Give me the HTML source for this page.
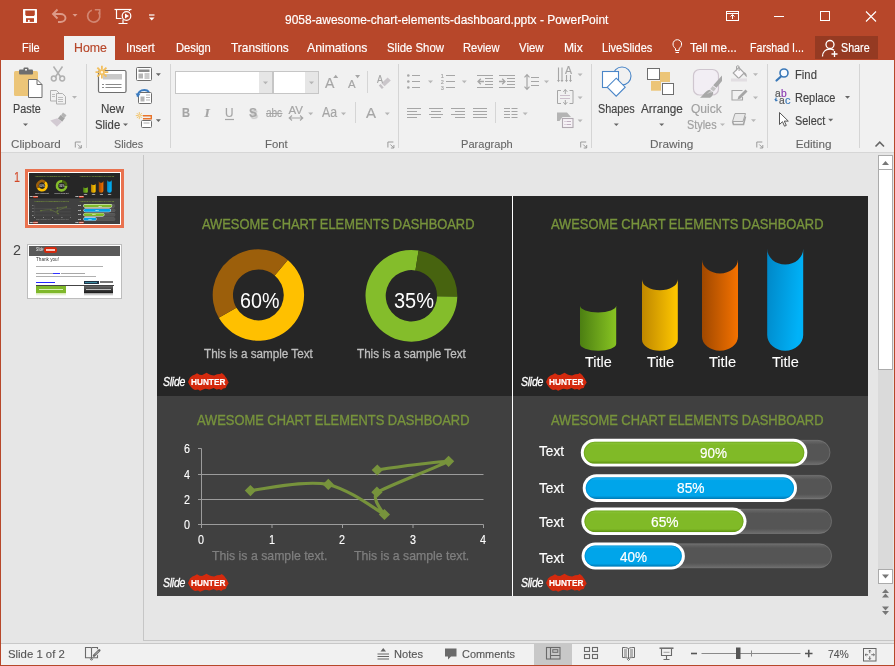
<!DOCTYPE html>
<html>
<head>
<meta charset="utf-8">
<title>PowerPoint</title>
<style>
*{box-sizing:border-box;margin:0;padding:0}
html,body{width:895px;height:666px;overflow:hidden;background:#e6e6e6;font-family:"Liberation Sans",sans-serif;}
#app{position:relative;width:895px;height:666px;overflow:hidden;background:#e6e6e6;will-change:transform}
.abs{position:absolute}
.t{position:absolute;white-space:nowrap;line-height:1;transform-origin:0 50%;display:block;-webkit-text-stroke:.18px}
</style>
</head>
<body>
<div id="app">
<!-- titlebar -->
<div class="abs" style="left:0px;top:0px;width:895px;height:60px;background:#b7472a;"></div>
<span class="t" style="left:284.50px;top:13.00px;font-size:13.3px;color:#fff;transform:scaleX(0.9004);">9058-awesome-chart-elements-dashboard.pptx - PowerPoint</span>
<div class="abs" style="left:64px;top:36px;width:51px;height:24px;background:#f1f1f1;"></div>
<span class="t" style="left:21.50px;top:41.00px;font-size:13.3px;color:#fff;transform:scaleX(0.8259);">File</span>
<span class="t" style="left:73.70px;top:41.00px;font-size:13.3px;color:#b7472a;transform:scaleX(0.9273);">Home</span>
<span class="t" style="left:126.40px;top:41.00px;font-size:13.3px;color:#fff;transform:scaleX(0.8658);">Insert</span>
<span class="t" style="left:175.70px;top:41.00px;font-size:13.3px;color:#fff;transform:scaleX(0.8406);">Design</span>
<span class="t" style="left:230.60px;top:41.00px;font-size:13.3px;color:#fff;transform:scaleX(0.8938);">Transitions</span>
<span class="t" style="left:307.40px;top:41.00px;font-size:13.3px;color:#fff;transform:scaleX(0.9180);">Animations</span>
<span class="t" style="left:387.20px;top:41.00px;font-size:13.3px;color:#fff;transform:scaleX(0.8566);">Slide Show</span>
<span class="t" style="left:463.30px;top:41.00px;font-size:13.3px;color:#fff;transform:scaleX(0.8393);">Review</span>
<span class="t" style="left:519.30px;top:41.00px;font-size:13.3px;color:#fff;transform:scaleX(0.8570);">View</span>
<span class="t" style="left:563.50px;top:41.00px;font-size:13.3px;color:#fff;transform:scaleX(0.9089);">Mix</span>
<span class="t" style="left:601.70px;top:41.00px;font-size:13.3px;color:#fff;transform:scaleX(0.8297);">LiveSlides</span>
<span class="t" style="left:690.00px;top:41.00px;font-size:13.3px;color:#fff;transform:scaleX(0.8795);">Tell me...</span>
<span class="t" style="left:750.00px;top:41.00px;font-size:13.3px;color:#fff;transform:scaleX(0.8013);">Farshad I...</span>
<div class="abs" style="left:815px;top:36px;width:63px;height:23px;background:#953a22;"></div>
<span class="t" style="left:841.40px;top:41.00px;font-size:13.3px;color:#fff;transform:scaleX(0.8058);">Share</span>
<svg class="abs" style="left:0;top:0" width="895" height="60" viewBox="0 0 895 60" fill="none">
<!-- save -->
<rect x="23" y="9" width="14" height="14" rx=".6" fill="#fff"/>
<path d="M25.300 10.400h9.500v4.400l-.9 1.200h-7.700l-.9-1.200z" fill="#b7472a"/>
<rect x="26" y="18.200" width="8" height="3.700" fill="#b7472a"/><rect x="28" y="19.900" width="1.700" height="2" fill="#fff"/>
<!-- undo -->
<g stroke="#dc9a88" stroke-width="1.9" fill="none">
<path d="M57.5 9.5l-4.5 4.5 4.5 4.5"/><path d="M53.5 14h7a5 4 0 0 1 0 8h-2.5"/>
</g>
<path d="M72.5 14h5l-2.5 2.7z" fill="#dc9a88"/>
<!-- redo -->
<g stroke="#d28672" stroke-width="1.6" fill="none">
<path d="M94.8 9.700h4.900v4.900"/><path d="M91.800 10.200A6.100 6.100 0 1 0 98.600 12.300" stroke-width="1.700"/>
</g>
<!-- slideshow from start -->
<g stroke="#fff" stroke-width="1.2" fill="none">
<path d="M114.5 9.5h17"/><path d="M116.5 10v8.5h5"/><path d="M129.5 10v1"/>
<circle cx="126.5" cy="16" r="4.3"/>
<path d="M123 19.5v3.5M118.500 23.500h9"/>
</g>
<path d="M125 13.5v5l4-2.500z" fill="#fff"/>
<!-- customize -->
<path d="M149 15h5.500" stroke="#fff" stroke-width="1.2"/><path d="M149 17.500h5.500l-2.750 3z" fill="#fff"/>
<!-- ribbon display options -->
<g stroke="#fff" stroke-width="1" fill="none"><rect x="726.5" y="11.500" width="12" height="9"/><path d="M726.500 13.500h12"/><path d="M732.500 19v-4M730.500 16.500l2-2 2 2"/></g>
<!-- min max close -->
<path d="M774 16.500h10" stroke="#fff" stroke-width="1"/>
<rect x="820.500" y="11.500" width="9" height="9" stroke="#fff" stroke-width="1"/>
<path d="M866 11.500l10 10M876 11.500l-10 10" stroke="#fff" stroke-width="1.100"/>
<!-- bulb -->
<g stroke="#fff" stroke-width="1" fill="none"><path d="M675.500 50.500v-2c-1.500-1-2.500-2.500-2.500-4.500a4.300 4.300 0 0 1 8.600 0c0 2-1 3.500-2.500 4.500v2z"/><path d="M675.500 52.500h3.500"/></g>
<!-- share person -->
<g stroke="#fff" stroke-width="1.300" fill="none"><circle cx="830" cy="44.500" r="4"/><path d="M822.500 56.500c0-5 3.500-7.500 7.500-7.500 1.500 0 3 .4 4 1.200"/><path d="M834.500 51v6M831.500 54h6"/></g>
</svg>
<!-- ribbon -->
<div class="abs" style="left:1px;top:60px;width:893px;height:92px;background:#f1f1f1;"></div>
<div class="abs" style="left:1px;top:152px;width:893px;height:1px;background:#d6d6d6;"></div>
<div class="abs" style="left:86px;top:64px;width:1px;height:84px;background:#d5d5d5;"></div>
<div class="abs" style="left:170px;top:64px;width:1px;height:84px;background:#d5d5d5;"></div>
<div class="abs" style="left:398px;top:64px;width:1px;height:84px;background:#d5d5d5;"></div>
<div class="abs" style="left:591px;top:64px;width:1px;height:84px;background:#d5d5d5;"></div>
<div class="abs" style="left:767px;top:64px;width:1px;height:84px;background:#d5d5d5;"></div>
<div class="abs" style="left:859px;top:64px;width:1px;height:84px;background:#d5d5d5;"></div>
<span class="t" style="left:10.50px;top:138.00px;font-size:11.7px;color:#666;transform:scaleX(0.9944);-webkit-text-stroke:0.1px;">Clipboard</span>
<span class="t" style="left:113.60px;top:138.00px;font-size:11.7px;color:#666;transform:scaleX(0.9163);-webkit-text-stroke:0.1px;">Slides</span>
<span class="t" style="left:265.00px;top:138.00px;font-size:11.7px;color:#666;transform:scaleX(0.9696);-webkit-text-stroke:0.1px;">Font</span>
<span class="t" style="left:460.80px;top:138.00px;font-size:11.7px;color:#666;transform:scaleX(0.9480);-webkit-text-stroke:0.1px;">Paragraph</span>
<span class="t" style="left:649.50px;top:138.00px;font-size:11.7px;color:#666;transform:scaleX(1.0089);-webkit-text-stroke:0.1px;">Drawing</span>
<span class="t" style="left:795.70px;top:138.00px;font-size:11.7px;color:#666;-webkit-text-stroke:0.1px;">Editing</span>
<svg class="abs" style="left:0;top:60px" width="895" height="92" viewBox="0 60 895 92" fill="none">
<path d="M75.3 147.5v-5.500h5.500" stroke="#9a9a9a" stroke-width="1"/><path d="M77.8 144.5l3.500 3.500M81.3 145v3h-3" stroke="#9a9a9a" stroke-width="1"/>
<path d="M387.9 147.5v-5.500h5.500" stroke="#9a9a9a" stroke-width="1"/><path d="M390.4 144.5l3.500 3.500M393.9 145v3h-3" stroke="#9a9a9a" stroke-width="1"/>
<path d="M580.7 147.5v-5.500h5.500" stroke="#9a9a9a" stroke-width="1"/><path d="M583.2 144.5l3.500 3.500M586.7 145v3h-3" stroke="#9a9a9a" stroke-width="1"/>
<path d="M756.8 147.5v-5.500h5.500" stroke="#9a9a9a" stroke-width="1"/><path d="M759.3 144.5l3.500 3.500M762.8 145v3h-3" stroke="#9a9a9a" stroke-width="1"/>
<path d="M875.500 146.500l4.250-4.250 4.250 4.250" stroke="#666" stroke-width="1.600"/>
<rect x="14" y="71" width="24" height="25" rx="1.500" fill="#ecc578"/><rect x="19" y="69.500" width="14" height="5" rx="1" fill="#6e6e6e"/><rect x="23.500" y="67.500" width="5" height="3.500" rx="1" fill="#6e6e6e"/><rect x="25" y="69" width="2" height="1.500" fill="#f1f1f1"/><path d="M28.500 79.500h8.500l5 5v13h-13.500z" fill="#fff" stroke="#6e6e6e" stroke-width="1"/><path d="M37 79.500v5h5" stroke="#6e6e6e" stroke-width="1" fill="none"/>
<path d="M23 123.4h5l-2.5 2.7z" fill="#666"/>
<g stroke="#b0b0b0" stroke-width="1.500" fill="none"><path d="M53.500 66.500l7.500 11M62.500 66.500l-7.500 11"/><circle cx="53.800" cy="78.500" r="2.400"/><circle cx="62.200" cy="78.500" r="2.400"/></g>
<g stroke="#b0b0b0" stroke-width="1" fill="#f1f1f1"><path d="M50.500 90.500h6l2.500 2.500v8h-8.500z"/><path d="M56.500 93.500h6l3 3v7.500h-9z"/><path d="M58 97.500h5M58 99.500h5M58 101.500h5M52 94.500h3M52 96.500h3" stroke-width=".8"/></g>
<path d="M72 96h5l-2.5 2.7z" fill="#b5b5b5"/>
<path d="M63 112.600l3.500 2.700-2 2.600-3.500-2.700z" fill="#b4b4b4"/><path d="M60.600 115l4.200 3.300-2.600 3.400-4.300-3.300z" fill="#a4a4a4"/><path d="M57.300 118.200l4.600 3.600-5 5-6.600-6.300z" fill="#d2cad2"/>
<rect x="98.500" y="70.500" width="27.500" height="22" rx="1.500" fill="#fff" stroke="#6e6e6e" stroke-width="1.200"/><rect x="103" y="74" width="19" height="5.500" fill="#c8c8c8"/><path d="M102 84.500h2M105.500 84.500h16M102 87.500h2M105.500 87.500h16" stroke="#8a8a8a" stroke-width="1"/>
<path d="M104.30 72.20L108.30 72.20M103.60 73.90L106.43 76.73M101.90 74.60L101.90 78.60M100.20 73.90L97.37 76.73M99.50 72.20L95.50 72.20M100.20 70.50L97.37 67.67M101.90 69.80L101.90 65.80M103.60 70.50L106.43 67.67" stroke="#f2bf5e" stroke-width="1.8" fill="none"/><circle cx="101.9" cy="72.2" r="2.0" fill="#fdf6e8" stroke="#f2bf5e" stroke-width="1.44"/>
<path d="M123 123.4h5l-2.5 2.7z" fill="#666"/>
<rect x="136.500" y="67.500" width="15" height="13" rx="1" fill="#fff" stroke="#6e6e6e" stroke-width="1"/><rect x="138.500" y="69.500" width="11" height="2.500" fill="#8a8a8a"/><rect x="138.500" y="73.500" width="4.500" height="5" fill="#b5b5b5"/><path d="M144.500 74h5M144.500 76h5M144.500 78h5" stroke="#8a8a8a" stroke-width=".9"/>
<path d="M155.9 73.3h5l-2.5 2.7z" fill="#666"/>
<rect x="138.500" y="92.500" width="13" height="11" rx="1" fill="#fff" stroke="#6e6e6e" stroke-width="1"/><rect x="140.500" y="96.500" width="4" height="5" fill="#b5b5b5"/><path d="M146 95h4M146 97.500h4M146 100h4" stroke="#b5b5b5" stroke-width="1"/><path d="M137.500 96.500c0-4 3-6.500 7-6.500 2 0 3.500 .700 4.500 2" stroke="#3a7bc0" stroke-width="1.800" fill="none"/><path d="M135.500 93.500h5l-2.500 4z" fill="#3a7bc0"/>
<rect x="141.500" y="120.500" width="10" height="7" rx="1" fill="#fff" stroke="#6e6e6e" stroke-width="1"/><path d="M143.500 123h6" stroke="#aaa"/><path d="M143 115.700h8.300v3h-8.300" stroke="#e8742c" stroke-width="1.400" fill="none"/><path d="M140.50 115.60L142.80 115.60M140.15 116.45L141.77 118.07M139.30 116.80L139.30 119.10M138.45 116.45L136.83 118.07M138.10 115.60L135.80 115.60M138.45 114.75L136.83 113.13M139.30 114.40L139.30 112.10M140.15 114.75L141.77 113.13" stroke="#f2bf5e" stroke-width="0.9" fill="none"/><circle cx="139.3" cy="115.6" r="0.9" fill="#fdf6e8" stroke="#f2bf5e" stroke-width="0.72"/>
<path d="M155.9 119.3h5l-2.5 2.7z" fill="#666"/>
<rect x="175.500" y="71.500" width="97" height="22" fill="#fff" stroke="#c6c6c6"/><rect x="259" y="72" width="13" height="21" fill="#e6e6e6"/><rect x="273.500" y="71.500" width="45" height="22" fill="#fff" stroke="#c6c6c6"/><rect x="305" y="72" width="13" height="21" fill="#e6e6e6"/>
<path d="M263 81.5h5l-2.5 2.7z" fill="#b5b5b5"/>
<path d="M309 81.5h5l-2.5 2.7z" fill="#b5b5b5"/>
<path d="M333.200 78h5l-2.500-3.300z" fill="#a6a6a6"/><path d="M355.100 74.900h5l-2.500 3.300z" fill="#a6a6a6"/><path d="M367.500 71v22M355.500 102v21" stroke="#d5d5d5"/>
<path d="M381.400 83.200l6.300-5.800 3.100 3.100-6.200 5.800z" fill="#cac6ca"/><path d="M378.800 85.400l1.800-1.300 3.100 3.300-1.800 1.600z" fill="#c4c0c4"/><path d="M289.500 118h13M292 115.500l-2.800 2.500 2.800 2.500M300 115.500l2.800 2.500-2.800 2.500" stroke="#a6a6a6" stroke-width="1.100" fill="none"/><path d="M308.2 112.5h5l-2.5 2.7z" fill="#b5b5b5"/>
<path d="M341 112.5h5l-2.5 2.7z" fill="#b5b5b5"/>
<path d="M384.8 112.5h5l-2.5 2.7z" fill="#b5b5b5"/>
<path d="M225 119.500h9" stroke="#a6a6a6" stroke-width="1.200"/><path d="M266 113.500h16.500" stroke="#a6a6a6" stroke-width="1"/>
<g fill="#a6a6a6"><circle cx="408.300" cy="75.500" r="1.300"/><circle cx="408.300" cy="81.500" r="1.300"/><circle cx="408.300" cy="87.500" r="1.300"/></g><path d="M412 75.500h8M412 81.500h8M412 87.500h8" stroke="#a6a6a6" stroke-width="1.100"/>
<path d="M428 80.5h5l-2.5 2.7z" fill="#b8b8b8"/>
<path d="M446 75.500h9M446 81.500h9M446 87.500h9" stroke="#a6a6a6" stroke-width="1.100"/><path d="M461.8 80.5h5l-2.5 2.7z" fill="#b8b8b8"/>
<path d="M477 75.500h16M485 78.500h8M485 81.500h8M485 84.500h8M477 87.500h16" stroke="#a6a6a6" stroke-width="1.100"/><path d="M478 81.500h6M480.800 78.700l-2.800 2.800 2.800 2.800" stroke="#a6a6a6" stroke-width="1.300" fill="none"/>
<path d="M499 75.500h16M507 78.500h8M507 81.500h8M507 84.500h8M499 87.500h16" stroke="#a6a6a6" stroke-width="1.100"/><path d="M499 81.500h6M502.200 78.700l2.800 2.800-2.800 2.800" stroke="#a6a6a6" stroke-width="1.300" fill="none"/>
<path d="M531 77.500h8M531 81.500h8M531 85.500h8" stroke="#a6a6a6" stroke-width="1.100"/><path d="M527 75v14M524.500 77.300l2.500-2.600 2.500 2.600M524.500 86.700l2.500 2.600 2.500-2.600" stroke="#a6a6a6" stroke-width="1.200" fill="none"/>
<path d="M544 80.5h5l-2.5 2.7z" fill="#b8b8b8"/>
<path d="M558.500 67.500v13M562 67.500v13M566.500 75v5.500M570.500 75v5.500" stroke="#a6a6a6" stroke-width="1.100" fill="none"/><path d="M557 80l1.500 2.200 1.500-2.200zM560.500 80l1.500 2.200 1.500-2.200zM565 80l1.500 2.200 1.500-2.200zM569 80l1.500 2.200 1.500-2.200z" fill="#a6a6a6"/><path d="M577.6 73.5h5l-2.5 2.7z" fill="#b8b8b8"/>
<path d="M561 90.500h-3.500v13h3.500M569.500 90.500h3.500v13h-3.500" stroke="#a6a6a6" stroke-width="1" fill="none"/><path d="M560 95.500h10M560 98.500h10" stroke="#cbbfcb" stroke-width="1"/><path d="M565.300 89.500v4.500M563.300 91.800l2-2.300 2 2.300M565.300 100v4.500M563.300 102.200l2 2.300 2-2.300" stroke="#a6a6a6" stroke-width="1" fill="none"/><path d="M577.6 96.5h5l-2.5 2.7z" fill="#b8b8b8"/>
<path d="M557 112.500h10l4 4.500h-8.500l-3 4h-2.500z" fill="#b4b4b4"/><rect x="562.500" y="118.500" width="10.500" height="9" fill="#f6f2f6" stroke="#b0a8b0" stroke-width="1.100"/><path d="M564.500 121.500h1M566.500 121.500h4.500M564.500 124.500h1M566.500 124.500h4.500" stroke="#c0b0c0" stroke-width="1"/><path d="M577.6 119.5h5l-2.5 2.7z" fill="#b8b8b8"/>
<path d="M407.0 108.5h14M407.0 111.5h10M407.0 114.5h14M407.0 117.5h10" stroke="#a6a6a6" stroke-width="1.1" fill="none"/><path d="M429.0 108.5h14M431.0 111.5h10M429.0 114.5h14M431.0 117.5h10" stroke="#a6a6a6" stroke-width="1.1" fill="none"/><path d="M451.0 108.5h14M455.0 111.5h10M451.0 114.5h14M455.0 117.5h10" stroke="#a6a6a6" stroke-width="1.1" fill="none"/><path d="M473.0 108.5h14M473.0 111.5h14M473.0 114.5h14M473.0 117.5h14" stroke="#a6a6a6" stroke-width="1.1" fill="none"/><path d="M495.500 102v21" stroke="#d5d5d5"/><path d="M504 108.500h6M511.500 108.500h6M504 111.500h6M511.500 111.500h6M504 114.500h6M511.500 114.500h6M504 117.500h6M511.500 117.500h6" stroke="#a6a6a6" stroke-width="1.100"/><path d="M522.7 112.5h5l-2.5 2.7z" fill="#b8b8b8"/>

<circle cx="622" cy="76" r="9" fill="#f1f1f1" stroke="#4a86c8" stroke-width="1.100"/><rect x="602.500" y="71.500" width="16" height="16" fill="#fff" stroke="#4a86c8" stroke-width="1.100"/><path d="M616.200 78.200l9 9-9 9-9-9z" fill="#fff" stroke="#4a86c8" stroke-width="1.100"/>
<path d="M613.8 123.4h5l-2.5 2.7z" fill="#666"/>
<rect x="660" y="72" width="10" height="10" fill="#ecc578"/><rect x="651" y="81" width="10" height="9.700" fill="#ecc578"/><rect x="647.500" y="68.500" width="12" height="11" fill="#fff" stroke="#6e6e6e" stroke-width="1"/><rect x="662.500" y="83.500" width="11" height="11" fill="#fff" stroke="#6e6e6e" stroke-width="1"/>
<path d="M659.2 123.4h5l-2.5 2.7z" fill="#666"/>
<rect x="693.500" y="69.500" width="25" height="25.500" rx="6" fill="#f2eef4" stroke="#cfc6cf" stroke-width="1.200"/><path d="M722 75.500v5.500l-5.500 6.700-3.300-2.400z" fill="#a8a8a8"/><path d="M712.600 86l3.400 2.500-2.300 3-3.500-2.500z" fill="#c4c4c4"/><path d="M709.500 89.700C705.500 90.500 703.500 95 700 97.700L710 97.700C712 96.500 713.700 94 713.100 92.200Z" fill="#a8a8a8"/><path d="M708 93.500c1-1.500 2.500-2 4-1.500" stroke="#ddd" stroke-width="1" fill="none"/>
<path d="M720 123.4h5l-2.5 2.7z" fill="#b8b8b8"/>
<path d="M738.700 67.500l5.500 5.500-5.500 5.500-5.500-5.500z" stroke="#a6a6a6" stroke-width="1.100" fill="#faf8fa"/><path d="M736.500 70.500v-3.500a1.300 1.300 0 0 1 2.600 0v4" stroke="#a6a6a6" stroke-width="1" fill="none"/><path d="M744.500 72.200c1.500 .5 2.500 2.500 2.300 5-1.200-.8-2-2-3.300-3.500z" fill="#a6a6a6"/><rect x="731" y="78.500" width="16" height="3" fill="#e2dee2"/><path d="M753 73.3h5l-2.5 2.7z" fill="#b8b8b8"/>
<path d="M742.500 90.500h-10.500v9.500h10.500v-3" stroke="#a6a6a6" stroke-width="1.100" fill="none"/><path d="M745.500 89.500l2 2-7 7-3 1 1-3z" fill="#a6a6a6"/><path d="M753 96.5h5l-2.5 2.7z" fill="#b8b8b8"/>
<path d="M735 113.500h10.500l-2.500 8h-10.500z" fill="#e8e8e8" stroke="#a6a6a6" stroke-width="1"/><path d="M732.500 121.500l1 3h10l2-8" stroke="#a6a6a6" stroke-width="1.600" fill="none"/><path d="M751 119.3h5l-2.5 2.7z" fill="#b8b8b8"/>
<circle cx="784" cy="73" r="4" stroke="#3a78b8" stroke-width="1.600" fill="#f8fbff"/><path d="M781 76.500l-4.500 4" stroke="#3a78b8" stroke-width="2.200" stroke-linecap="round"/>
<path d="M776 100.500v-3M774.800 99l1.200 1.800 1.500-.5" stroke="#3a78b8" stroke-width="1.100" fill="none"/><path d="M845 96h5l-2.5 2.7z" fill="#666"/>
<path d="M779.500 112.500v12l3-2.800 2 4.500 1.800-.8-2-4.300h4z" fill="#fff" stroke="#555" stroke-width="1" stroke-linejoin="round"/><path d="M828.2 118.8h5l-2.5 2.7z" fill="#666"/>

</svg>
<span class="t" style="left:12.50px;top:103.00px;font-size:12.3px;color:#444;transform:scaleX(0.8807);-webkit-text-stroke:0.15px;">Paste</span>
<span class="t" style="left:100.50px;top:103.00px;font-size:12.3px;color:#444;transform:scaleX(0.9428);-webkit-text-stroke:0.15px;">New</span>
<span class="t" style="left:94.80px;top:119.00px;font-size:12.3px;color:#444;transform:scaleX(0.9213);-webkit-text-stroke:0.15px;">Slide</span>
<span class="t" style="left:181.50px;top:106.00px;font-size:13.5px;color:#a6a6a6;font-weight:700;transform:scaleX(0.8206);">B</span>
<span class="t" style="left:204.50px;top:106.00px;font-size:13.5px;color:#a6a6a6;font-weight:700;font-style:italic;font-family:'Liberation Serif',serif;">I</span>
<span class="t" style="left:225.30px;top:106.00px;font-size:13.5px;color:#a6a6a6;transform:scaleX(0.8718);">U</span>
<span class="t" style="left:248.50px;top:106.00px;font-size:13.5px;color:#a6a6a6;font-weight:700;transform:scaleX(0.8884);text-shadow:1.500px 1.500px 1px #c8c8c8;">S</span>
<span class="t" style="left:266.20px;top:107.00px;font-size:12.5px;color:#a6a6a6;transform:scaleX(0.7988);">abc</span>
<span class="t" style="left:288.50px;top:105.00px;font-size:11.5px;color:#a6a6a6;">AV</span>
<span class="t" style="left:321.50px;top:105.00px;font-size:14px;color:#a6a6a6;transform:scaleX(0.8759);">Aa</span>
<span class="t" style="left:325.00px;top:76.00px;font-size:14px;color:#a6a6a6;transform:scaleX(1.0066);">A</span>
<span class="t" style="left:348.20px;top:79.00px;font-size:11.5px;color:#a6a6a6;transform:scaleX(0.9908);">A</span>
<span class="t" style="left:377.00px;top:74.00px;font-size:10.5px;color:#a6a6a6;transform:scaleX(0.8567);">A</span>
<span class="t" style="left:366.30px;top:105.00px;font-size:15.5px;color:#a6a6a6;transform:scaleX(0.9672);">A</span>
<span class="t" style="left:440.70px;top:74.00px;font-size:5.5px;color:#a6a6a6;-webkit-text-stroke:0.2px;">1</span>
<span class="t" style="left:440.70px;top:80.00px;font-size:5.5px;color:#a6a6a6;-webkit-text-stroke:0.2px;">2</span>
<span class="t" style="left:440.70px;top:86.00px;font-size:5.5px;color:#a6a6a6;-webkit-text-stroke:0.2px;">3</span>
<span class="t" style="left:565.00px;top:65.00px;font-size:10.5px;color:#a6a6a6;">A</span>
<span class="t" style="left:598.30px;top:103.00px;font-size:12.3px;color:#444;transform:scaleX(0.8797);-webkit-text-stroke:0.15px;">Shapes</span>
<span class="t" style="left:640.50px;top:103.00px;font-size:12.3px;color:#444;transform:scaleX(0.9552);-webkit-text-stroke:0.15px;">Arrange</span>
<span class="t" style="left:691.30px;top:103.00px;font-size:12.3px;color:#a0a0a0;transform:scaleX(0.9796);">Quick</span>
<span class="t" style="left:687.30px;top:119.00px;font-size:12.3px;color:#a0a0a0;transform:scaleX(0.8837);">Styles</span>
<span class="t" style="left:794.70px;top:69.00px;font-size:12.3px;color:#444;transform:scaleX(0.9152);-webkit-text-stroke:0.15px;">Find</span>
<span class="t" style="left:794.70px;top:92.00px;font-size:12.3px;color:#444;transform:scaleX(0.8930);-webkit-text-stroke:0.15px;">Replace</span>
<span class="t" style="left:794.70px;top:115.00px;font-size:12.3px;color:#444;transform:scaleX(0.8834);-webkit-text-stroke:0.15px;">Select</span>
<span class="t" style="left:774.80px;top:88.00px;font-size:10.5px;color:#555;transform:scaleX(0.9761);">a</span>
<span class="t" style="left:780.80px;top:88.00px;font-size:10.5px;color:#8a3ab0;transform:scaleX(0.9761);">b</span>
<span class="t" style="left:779.30px;top:95.00px;font-size:10.5px;color:#555;transform:scaleX(0.9761);">a</span>
<span class="t" style="left:785.20px;top:95.00px;font-size:10.5px;color:#3a78b8;transform:scaleX(1.0476);">c</span>
<!-- work -->
<div class="abs" style="left:1px;top:153px;width:893px;height:490px;background:#e6e6e6;"></div>
<div class="abs" style="left:143px;top:155px;width:1px;height:486px;background:#c6c6c6;"></div>
<div class="abs" style="left:144px;top:640px;width:750px;height:1px;background:#c6c6c6;"></div>
<span class="t" style="left:14.00px;top:169.00px;font-size:15.5px;color:#d24726;transform:scaleX(0.6960);-webkit-text-stroke:0.1px;">1</span>
<span class="t" style="left:13.20px;top:242.00px;font-size:15px;color:#444;transform:scaleX(0.9589);-webkit-text-stroke:0px;">2</span>
<div class="abs" style="left:25px;top:169px;width:99px;height:59px;background:#e9724f;"></div>
<div class="abs" style="left:28px;top:172px;width:93px;height:53px;background:#fff;"></div>
<div class="abs" style="left:29px;top:173px;width:91px;height:51px;background:#262626;"></div>
<div class="abs" style="left:29px;top:198px;width:91px;height:26px;background:#404040;"></div>
<div class="abs" style="left:29px;top:173px;width:91px;height:51px;overflow:hidden"><div class="abs" style="left:0;top:0;width:895px;height:666px;transform-origin:0 0;transform:scale(.128) translate(-157px,-196px)">
<div class="abs" style="left:157px;top:196px;width:711px;height:200px;background:#262626;"></div>
<div class="abs" style="left:157px;top:396px;width:711px;height:200px;background:#404040;"></div>
<div class="abs" style="left:511.7px;top:196px;width:1.3px;height:400px;background:transparent;"></div>
<span class="t" style="left:201.60px;top:217.00px;font-size:14.3px;color:#77933c;transform:scaleX(0.9009);-webkit-text-stroke:0.35px;">AWESOME CHART ELEMENTS DASHBOARD</span>
<span class="t" style="left:551.10px;top:217.00px;font-size:14.3px;color:#77933c;transform:scaleX(0.9009);-webkit-text-stroke:0.35px;">AWESOME CHART ELEMENTS DASHBOARD</span>
<span class="t" style="left:197.30px;top:413.00px;font-size:14.3px;color:#77933c;transform:scaleX(0.9009);-webkit-text-stroke:0.35px;">AWESOME CHART ELEMENTS DASHBOARD</span>
<span class="t" style="left:551.10px;top:413.00px;font-size:14.3px;color:#77933c;transform:scaleX(0.9009);-webkit-text-stroke:0.35px;">AWESOME CHART ELEMENTS DASHBOARD</span>
<svg class="abs" style="left:157px;top:196px" width="711" height="400" viewBox="157 196 711 400" fill="none">
<path d="M287.78 259.99A45.7 45.7 0 1 1 218.82 317.85L236.40 307.70A25.4 25.4 0 1 0 274.73 275.54Z" fill="#ffc000"/><path d="M218.82 317.85A45.7 45.7 0 0 1 287.78 259.99L274.73 275.54A25.4 25.4 0 0 0 236.40 307.70Z" fill="#9c5f0b"/>
<path d="M457.29 296.60A45.9 45.9 0 1 1 418.58 250.47L415.42 270.42A25.7 25.7 0 1 0 437.10 296.25Z" fill="#84bd2b"/><path d="M418.58 250.47A45.9 45.9 0 0 1 457.29 296.60L437.10 296.25A25.7 25.7 0 0 0 415.42 270.42Z" fill="#47630f"/>
<defs><linearGradient id="tg1" x1="0" y1="0" x2="1" y2="0"><stop offset="0" stop-color="#4c7f12"/><stop offset="1" stop-color="#88c422"/></linearGradient></defs><path d="M580 305.5A18.1 7.0059999999999985 0 0 0 616.2 305.5L616.2 343.69A18.1 7.0059999999999985 0 0 1 580 343.69Z" fill="url(#tg1)"/>
<defs><linearGradient id="tg2" x1="0" y1="0" x2="1" y2="0"><stop offset="0" stop-color="#bf8700"/><stop offset="1" stop-color="#ffc800"/></linearGradient></defs><path d="M642 279.2A17.9 11.0825 0 0 0 677.8 279.2L677.8 339.62A17.9 11.0825 0 0 1 642 339.62Z" fill="url(#tg2)"/>
<defs><linearGradient id="tg3" x1="0" y1="0" x2="1" y2="0"><stop offset="0" stop-color="#a04800"/><stop offset="1" stop-color="#f47200"/></linearGradient></defs><path d="M702 259.2A18.0 14.1825 0 0 0 738 259.2L738 336.52A18.0 14.1825 0 0 1 702 336.52Z" fill="url(#tg3)"/>
<defs><linearGradient id="tg4" x1="0" y1="0" x2="1" y2="0.25"><stop offset="0" stop-color="#0086c6"/><stop offset="1" stop-color="#00b2f8"/></linearGradient></defs><path d="M767.2 248.7A18.0 15.81 0 0 0 803.2 248.7L803.2 334.89A18.0 15.81 0 0 1 767.2 334.89Z" fill="url(#tg4)"/>
<path d="M201.500 448.500v76.500M198 448.500h3.500M198 474.500h285.500M198 499.500h285.500M198 524.500h285.500" stroke="#9c9c9c" stroke-width="1"/><path d="M201.500 524.500v3.500M272 524.500v3.500M342.500 524.500v3.500M413 524.500v3.500M483.500 524.500v3.500" stroke="#9c9c9c" stroke-width="1"/>
<path d="M250.400 490.600C276 487 306 480.500 328.300 484.400C350 490 372 507 384.400 514.500C377 505 373 496 376.900 492.200C400 481 430 470 448.600 461.300C425 463 400 466.500 377.300 470" stroke="#77933c" stroke-width="3.100" stroke-linejoin="round" stroke-linecap="round"/><path d="M250.4 485.0l5.600 5.600-5.600 5.600-5.600-5.600z" fill="#77933c"/><path d="M328.3 478.79999999999995l5.600 5.600-5.600 5.600-5.600-5.600z" fill="#77933c"/><path d="M384.4 508.9l5.600 5.600-5.600 5.600-5.600-5.600z" fill="#77933c"/><path d="M376.9 486.59999999999997l5.600 5.600-5.600 5.600-5.600-5.600z" fill="#77933c"/><path d="M448.6 455.7l5.600 5.600-5.600 5.600-5.600-5.600z" fill="#77933c"/><path d="M377.3 464.4l5.600 5.600-5.600 5.600-5.600-5.600z" fill="#77933c"/>
<defs><linearGradient id="ttr" x1="0" y1="0" x2="0" y2="1"><stop offset="0" stop-color="#6a6a6a"/><stop offset=".18" stop-color="#555"/><stop offset=".8" stop-color="#555"/><stop offset="1" stop-color="#6e6e6e"/></linearGradient><linearGradient id="tgg" x1="0" y1="0" x2="0" y2="1"><stop offset="0" stop-color="#8cc63a"/><stop offset=".15" stop-color="#80ba27"/><stop offset=".85" stop-color="#80ba27"/><stop offset="1" stop-color="#5f9412"/></linearGradient><linearGradient id="tgb" x1="0" y1="0" x2="0" y2="1"><stop offset="0" stop-color="#2cb6f0"/><stop offset=".15" stop-color="#00a5ea"/><stop offset=".85" stop-color="#00a5ea"/><stop offset="1" stop-color="#007cb8"/></linearGradient></defs>
<rect x="582.8" y="440.3" width="247.2" height="24.3" rx="12.2" fill="url(#ttr)" stroke="#8c8c8c" stroke-opacity=".45" stroke-width="1"/><rect x="580.8" y="438.8" width="226.5" height="27.8" rx="13.9" fill="#fff"/><rect x="583.8" y="441.8" width="220.5" height="21.8" rx="10.9" fill="url(#tgg)"/><rect x="584.3" y="442.3" width="219.5" height="20.8" rx="10.4" fill="none" stroke="#5f9412" stroke-opacity=".45" stroke-width="1"/>
<rect x="584.7" y="475.4" width="246.9" height="23.5" rx="11.8" fill="url(#ttr)" stroke="#8c8c8c" stroke-opacity=".45" stroke-width="1"/><rect x="582.7" y="474.3" width="214.3" height="27.6" rx="13.8" fill="#fff"/><rect x="585.7" y="477.3" width="208.3" height="21.6" rx="10.8" fill="url(#tgb)"/><rect x="586.2" y="477.8" width="207.3" height="20.6" rx="10.3" fill="none" stroke="#007cb8" stroke-opacity=".45" stroke-width="1"/>
<rect x="583.4" y="509.2" width="248.2" height="24.3" rx="12.2" fill="url(#ttr)" stroke="#8c8c8c" stroke-opacity=".45" stroke-width="1"/><rect x="581.4" y="507.6" width="165.1" height="27.5" rx="13.8" fill="#fff"/><rect x="584.4" y="510.6" width="159.1" height="21.5" rx="10.8" fill="url(#tgg)"/><rect x="584.9" y="511.1" width="158.1" height="20.5" rx="10.2" fill="none" stroke="#5f9412" stroke-opacity=".45" stroke-width="1"/>
<rect x="583.6" y="543.8" width="248.0" height="24.0" rx="12.0" fill="url(#ttr)" stroke="#8c8c8c" stroke-opacity=".45" stroke-width="1"/><rect x="581.6" y="542.4" width="103.3" height="27.2" rx="13.6" fill="#fff"/><rect x="584.6" y="545.4" width="97.3" height="21.2" rx="10.6" fill="url(#tgb)"/><rect x="585.1" y="545.9" width="96.3" height="20.2" rx="10.1" fill="none" stroke="#007cb8" stroke-opacity=".45" stroke-width="1"/>
</svg>
<span class="t" style="left:239.60px;top:291.00px;font-size:21.5px;color:#fff;transform:scaleX(0.9156);-webkit-text-stroke:0px;">60%</span>
<span class="t" style="left:393.90px;top:291.00px;font-size:21.5px;color:#fff;transform:scaleX(0.9295);-webkit-text-stroke:0px;">35%</span>
<span class="t" style="left:203.50px;top:348.00px;font-size:12.5px;color:#bfbfbf;transform:scaleX(0.9332);-webkit-text-stroke:0.3px;">This is a sample Text</span>
<span class="t" style="left:357.40px;top:348.00px;font-size:12.5px;color:#bfbfbf;transform:scaleX(0.9332);-webkit-text-stroke:0.3px;">This is a sample Text</span>
<span class="t" style="left:584.80px;top:355.00px;font-size:14.3px;color:#fff;transform:scaleX(1.0081);-webkit-text-stroke:0.1px;">Title</span>
<span class="t" style="left:646.90px;top:355.00px;font-size:14.3px;color:#fff;transform:scaleX(1.0232);-webkit-text-stroke:0.1px;">Title</span>
<span class="t" style="left:708.90px;top:355.00px;font-size:14.3px;color:#fff;transform:scaleX(1.0194);-webkit-text-stroke:0.1px;">Title</span>
<span class="t" style="left:771.60px;top:355.00px;font-size:14.3px;color:#fff;transform:scaleX(1.0157);-webkit-text-stroke:0.1px;">Title</span>
<span class="t" style="left:184.00px;top:443.00px;font-size:12px;color:#fff;transform:scaleX(0.8990);-webkit-text-stroke:0.12px;">6</span>
<span class="t" style="left:184.00px;top:469.00px;font-size:12px;color:#fff;transform:scaleX(0.8990);-webkit-text-stroke:0.12px;">4</span>
<span class="t" style="left:184.00px;top:494.00px;font-size:12px;color:#fff;transform:scaleX(0.8990);-webkit-text-stroke:0.12px;">2</span>
<span class="t" style="left:184.00px;top:519.00px;font-size:12px;color:#fff;transform:scaleX(0.8990);-webkit-text-stroke:0.12px;">0</span>
<span class="t" style="left:198.40px;top:534.00px;font-size:12px;color:#fff;transform:scaleX(0.8990);-webkit-text-stroke:0.12px;">0</span>
<span class="t" style="left:269.00px;top:534.00px;font-size:12px;color:#fff;transform:scaleX(0.8990);-webkit-text-stroke:0.12px;">1</span>
<span class="t" style="left:339.40px;top:534.00px;font-size:12px;color:#fff;transform:scaleX(0.8990);-webkit-text-stroke:0.12px;">2</span>
<span class="t" style="left:409.80px;top:534.00px;font-size:12px;color:#fff;transform:scaleX(0.8990);-webkit-text-stroke:0.12px;">3</span>
<span class="t" style="left:480.40px;top:534.00px;font-size:12px;color:#fff;transform:scaleX(0.8990);-webkit-text-stroke:0.12px;">4</span>
<span class="t" style="left:211.60px;top:549.00px;font-size:13px;color:#7f7f7f;transform:scaleX(0.9451);-webkit-text-stroke:0.25px;">This is a sample text.</span>
<span class="t" style="left:354.20px;top:549.00px;font-size:13px;color:#7f7f7f;transform:scaleX(0.9435);-webkit-text-stroke:0.25px;">This is a sample text.</span>
<span class="t" style="left:538.90px;top:444.00px;font-size:14.3px;color:#fff;transform:scaleX(0.9571);">Text</span>
<span class="t" style="left:538.90px;top:481.00px;font-size:14.3px;color:#fff;transform:scaleX(0.9571);">Text</span>
<span class="t" style="left:538.90px;top:515.00px;font-size:14.3px;color:#fff;transform:scaleX(0.9571);">Text</span>
<span class="t" style="left:538.90px;top:551.00px;font-size:14.3px;color:#fff;transform:scaleX(0.9571);">Text</span>
<span class="t" style="left:700.30px;top:446.00px;font-size:14px;color:#fff;transform:scaleX(0.9636);">90%</span>
<span class="t" style="left:676.80px;top:481.00px;font-size:14px;color:#fff;transform:scaleX(0.9814);">85%</span>
<span class="t" style="left:650.50px;top:515.00px;font-size:14px;color:#fff;transform:scaleX(0.9850);">65%</span>
<span class="t" style="left:620.00px;top:550.00px;font-size:14px;color:#fff;transform:scaleX(0.9636);">40%</span>
<svg class="abs" style="left:186.89999999999998px;top:371.5px" width="44" height="21" viewBox="186.89999999999998 371.5 44 21"><path d="M187.9 381.6 L189.9 377.1 L192.4 375.1 L194.9 374.1 L196.9 372.8 L199.5 374.3 L202.0 374.6 L204.0 373.5 L206.5 372.2 L209.0 373.8 L211.0 374.6 L214.0 375.1 L217.0 373.8 L220.1 373.5 L221.6 372.5 L224.1 374.6 L225.1 376.1 L226.6 378.1 L228.6 382.1 L226.6 385.1 L225.6 387.6 L223.1 387.9 L221.1 389.6 L219.1 388.6 L216.5 388.9 L213.5 387.6 L211.0 388.6 L209.0 389.1 L207.0 388.6 L205.0 388.3 L203.0 389.1 L200.0 390.3 L197.9 389.1 L194.9 389.6 L192.9 388.6 L190.9 386.6 L189.4 384.6Z" fill="#d42a0e"/></svg>
<span class="t" style="left:162.60px;top:376.00px;font-size:12.5px;color:#fff;font-style:italic;transform:scaleX(0.8418);-webkit-text-stroke:0.3px;letter-spacing:-0.3px;">Slide</span>
<span class="t" style="left:191.00px;top:379.00px;font-size:8.2px;color:#fff;font-weight:700;transform:scaleX(1.0068);">HUNTER</span>
<svg class="abs" style="left:544.9000000000001px;top:371.5px" width="44" height="21" viewBox="544.9000000000001 371.5 44 21"><path d="M545.9 381.6 L547.9 377.1 L550.4 375.1 L552.9 374.1 L554.9 372.8 L557.5 374.3 L560.0 374.6 L562.0 373.5 L564.5 372.2 L567.0 373.8 L569.0 374.6 L572.0 375.1 L575.0 373.8 L578.1 373.5 L579.6 372.5 L582.1 374.6 L583.1 376.1 L584.6 378.1 L586.6 382.1 L584.6 385.1 L583.6 387.6 L581.1 387.9 L579.1 389.6 L577.1 388.6 L574.5 388.9 L571.5 387.6 L569.0 388.6 L567.0 389.1 L565.0 388.6 L563.0 388.3 L561.0 389.1 L558.0 390.3 L555.9 389.1 L552.9 389.6 L550.9 388.6 L548.9 386.6 L547.4 384.6Z" fill="#d42a0e"/></svg>
<span class="t" style="left:520.60px;top:376.00px;font-size:12.5px;color:#fff;font-style:italic;transform:scaleX(0.8418);-webkit-text-stroke:0.3px;letter-spacing:-0.3px;">Slide</span>
<span class="t" style="left:549.00px;top:379.00px;font-size:8.2px;color:#fff;font-weight:700;transform:scaleX(1.0068);">HUNTER</span>
<svg class="abs" style="left:186.89999999999998px;top:572.5px" width="44" height="21" viewBox="186.89999999999998 572.5 44 21"><path d="M187.9 582.6 L189.9 578.1 L192.4 576.1 L194.9 575.1 L196.9 573.8 L199.5 575.3 L202.0 575.6 L204.0 574.5 L206.5 573.2 L209.0 574.8 L211.0 575.6 L214.0 576.1 L217.0 574.8 L220.1 574.5 L221.6 573.5 L224.1 575.6 L225.1 577.1 L226.6 579.1 L228.6 583.1 L226.6 586.1 L225.6 588.6 L223.1 588.9 L221.1 590.6 L219.1 589.6 L216.5 589.9 L213.5 588.6 L211.0 589.6 L209.0 590.1 L207.0 589.6 L205.0 589.3 L203.0 590.1 L200.0 591.3 L197.9 590.1 L194.9 590.6 L192.9 589.6 L190.9 587.6 L189.4 585.6Z" fill="#d42a0e"/></svg>
<span class="t" style="left:162.60px;top:577.00px;font-size:12.5px;color:#fff;font-style:italic;transform:scaleX(0.8418);-webkit-text-stroke:0.3px;letter-spacing:-0.3px;">Slide</span>
<span class="t" style="left:191.00px;top:580.00px;font-size:8.2px;color:#fff;font-weight:700;transform:scaleX(1.0068);">HUNTER</span>
<svg class="abs" style="left:544.9000000000001px;top:572.5px" width="44" height="21" viewBox="544.9000000000001 572.5 44 21"><path d="M545.9 582.6 L547.9 578.1 L550.4 576.1 L552.9 575.1 L554.9 573.8 L557.5 575.3 L560.0 575.6 L562.0 574.5 L564.5 573.2 L567.0 574.8 L569.0 575.6 L572.0 576.1 L575.0 574.8 L578.1 574.5 L579.6 573.5 L582.1 575.6 L583.1 577.1 L584.6 579.1 L586.6 583.1 L584.6 586.1 L583.6 588.6 L581.1 588.9 L579.1 590.6 L577.1 589.6 L574.5 589.9 L571.5 588.6 L569.0 589.6 L567.0 590.1 L565.0 589.6 L563.0 589.3 L561.0 590.1 L558.0 591.3 L555.9 590.1 L552.9 590.6 L550.9 589.6 L548.9 587.6 L547.4 585.6Z" fill="#d42a0e"/></svg>
<span class="t" style="left:520.60px;top:577.00px;font-size:12.5px;color:#fff;font-style:italic;transform:scaleX(0.8418);-webkit-text-stroke:0.3px;letter-spacing:-0.3px;">Slide</span>
<span class="t" style="left:549.00px;top:580.00px;font-size:8.2px;color:#fff;font-weight:700;transform:scaleX(1.0068);">HUNTER</span>
</div></div>
<div class="abs" style="left:27px;top:244px;width:95px;height:55px;background:#fff;border:1px solid #bdbdbd;"></div>
<div class="abs" style="left:29px;top:246px;width:91px;height:10px;background:#595959;"></div>
<span class="t" style="left:36.00px;top:248.11px;font-size:4.6px;color:#eee;font-style:italic;transform:scaleX(0.7234);-webkit-text-stroke:0px;">Slide</span>
<div class="abs" style="left:44.3px;top:247.2px;width:12.6px;height:5.5px;background:#d42a0e;border-radius:2.500px;"></div>
<div class="abs" style="left:46px;top:249.4px;width:9px;height:1.3px;background:#f4c8c0;"></div>
<span class="t" style="left:36.00px;top:257.00px;font-size:5.2px;color:#333;transform:scaleX(0.8940);-webkit-text-stroke:0px;">Thank you!</span>
<div class="abs" style="left:36px;top:266.2px;width:67px;height:0.7px;background:#b0b0b0;"></div>
<div class="abs" style="left:36px;top:272.9px;width:17px;height:0.7px;background:#a8a8a8;"></div>
<div class="abs" style="left:53px;top:272.7px;width:7px;height:0.9px;background:#33f;"></div>
<div class="abs" style="left:60.5px;top:272.9px;width:24px;height:0.7px;background:#a8a8a8;"></div>
<div class="abs" style="left:36px;top:275.6px;width:59.5px;height:0.7px;background:#b0b0b0;"></div>
<div class="abs" style="left:36px;top:281.6px;width:18.8px;height:0.9px;background:#22f;"></div>
<div class="abs" style="left:83.9px;top:280.8px;width:14.8px;height:2.9px;background:#234;"></div>
<div class="abs" style="left:85px;top:281.8px;width:12px;height:0.9px;background:#3a8aa0;"></div>
<div class="abs" style="left:99.5px;top:281.3px;width:13.5px;height:1.8px;background:#777;"></div>
<div class="abs" style="left:36px;top:284.9px;width:78px;height:0.9px;background:#444;"></div>
<div class="abs" style="left:36px;top:286px;width:30px;height:7.3px;background:#7fb82a;"></div>
<div class="abs" style="left:38.5px;top:289.2px;width:24px;height:0.9px;background:#d8ecb8;"></div>
<div class="abs" style="left:36px;top:293.3px;width:30px;height:2.7px;background:linear-gradient(#cfe5a8,#fff);"></div>
<div class="abs" style="left:83.9px;top:286px;width:29.5px;height:7.3px;background:linear-gradient(#666,#1a1a1a);"></div>
<div class="abs" style="left:86px;top:289.2px;width:25px;height:0.9px;background:#bbb;"></div>
<div class="abs" style="left:83.9px;top:293.3px;width:29.5px;height:2.7px;background:linear-gradient(#999,#fff);"></div>
<div class="abs" style="left:878px;top:155px;width:15px;height:429px;background:#dadada;"></div>
<div class="abs" style="left:878px;top:155px;width:15px;height:15px;background:#fff;border:1px solid #ababab;"></div>
<div class="abs" style="left:878px;top:170px;width:15px;height:200px;background:#fff;border:1px solid #ababab;border-top:none;"></div>
<div class="abs" style="left:878px;top:569px;width:15px;height:15px;background:#fff;border:1px solid #ababab;"></div>
<svg class="abs" style="left:876px;top:155px" width="18" height="465" viewBox="876 155 18 465">
<path d="M882 165h7l-3.500-4z" fill="#777"/><path d="M882 574.500h7l-3.500 4z" fill="#777"/>
<path d="M882 593h7l-3.500-4z M882 597.500h7l-3.500-4z" fill="#777"/>
<path d="M882 606.500h7l-3.500 4z M882 611h7l-3.500 4z" fill="#777"/>
</svg>
<!-- slide -->
<div class="abs" style="left:157px;top:196px;width:711px;height:200px;background:#262626;"></div>
<div class="abs" style="left:157px;top:396px;width:711px;height:200px;background:#404040;"></div>
<div class="abs" style="left:511.7px;top:196px;width:1.3px;height:400px;background:#fff;"></div>
<span class="t" style="left:201.60px;top:217.00px;font-size:14.3px;color:#77933c;transform:scaleX(0.9009);-webkit-text-stroke:0.35px;">AWESOME CHART ELEMENTS DASHBOARD</span>
<span class="t" style="left:551.10px;top:217.00px;font-size:14.3px;color:#77933c;transform:scaleX(0.9009);-webkit-text-stroke:0.35px;">AWESOME CHART ELEMENTS DASHBOARD</span>
<span class="t" style="left:197.30px;top:413.00px;font-size:14.3px;color:#77933c;transform:scaleX(0.9009);-webkit-text-stroke:0.35px;">AWESOME CHART ELEMENTS DASHBOARD</span>
<span class="t" style="left:551.10px;top:413.00px;font-size:14.3px;color:#77933c;transform:scaleX(0.9009);-webkit-text-stroke:0.35px;">AWESOME CHART ELEMENTS DASHBOARD</span>
<svg class="abs" style="left:157px;top:196px" width="711" height="400" viewBox="157 196 711 400" fill="none">
<path d="M287.78 259.99A45.7 45.7 0 1 1 218.82 317.85L236.40 307.70A25.4 25.4 0 1 0 274.73 275.54Z" fill="#ffc000"/><path d="M218.82 317.85A45.7 45.7 0 0 1 287.78 259.99L274.73 275.54A25.4 25.4 0 0 0 236.40 307.70Z" fill="#9c5f0b"/>
<path d="M457.29 296.60A45.9 45.9 0 1 1 418.58 250.47L415.42 270.42A25.7 25.7 0 1 0 437.10 296.25Z" fill="#84bd2b"/><path d="M418.58 250.47A45.9 45.9 0 0 1 457.29 296.60L437.10 296.25A25.7 25.7 0 0 0 415.42 270.42Z" fill="#47630f"/>
<defs><linearGradient id="g1" x1="0" y1="0" x2="1" y2="0"><stop offset="0" stop-color="#4c7f12"/><stop offset="1" stop-color="#88c422"/></linearGradient></defs><path d="M580 305.5A18.1 7.0059999999999985 0 0 0 616.2 305.5L616.2 343.69A18.1 7.0059999999999985 0 0 1 580 343.69Z" fill="url(#g1)"/>
<defs><linearGradient id="g2" x1="0" y1="0" x2="1" y2="0"><stop offset="0" stop-color="#bf8700"/><stop offset="1" stop-color="#ffc800"/></linearGradient></defs><path d="M642 279.2A17.9 11.0825 0 0 0 677.8 279.2L677.8 339.62A17.9 11.0825 0 0 1 642 339.62Z" fill="url(#g2)"/>
<defs><linearGradient id="g3" x1="0" y1="0" x2="1" y2="0"><stop offset="0" stop-color="#a04800"/><stop offset="1" stop-color="#f47200"/></linearGradient></defs><path d="M702 259.2A18.0 14.1825 0 0 0 738 259.2L738 336.52A18.0 14.1825 0 0 1 702 336.52Z" fill="url(#g3)"/>
<defs><linearGradient id="g4" x1="0" y1="0" x2="1" y2="0.25"><stop offset="0" stop-color="#0086c6"/><stop offset="1" stop-color="#00b2f8"/></linearGradient></defs><path d="M767.2 248.7A18.0 15.81 0 0 0 803.2 248.7L803.2 334.89A18.0 15.81 0 0 1 767.2 334.89Z" fill="url(#g4)"/>
<path d="M201.500 448.500v76.500M198 448.500h3.500M198 474.500h285.500M198 499.500h285.500M198 524.500h285.500" stroke="#9c9c9c" stroke-width="1"/><path d="M201.500 524.500v3.500M272 524.500v3.500M342.500 524.500v3.500M413 524.500v3.500M483.500 524.500v3.500" stroke="#9c9c9c" stroke-width="1"/>
<path d="M250.400 490.600C276 487 306 480.500 328.300 484.400C350 490 372 507 384.400 514.500C377 505 373 496 376.900 492.200C400 481 430 470 448.600 461.300C425 463 400 466.500 377.300 470" stroke="#77933c" stroke-width="3.100" stroke-linejoin="round" stroke-linecap="round"/><path d="M250.4 485.0l5.600 5.600-5.600 5.600-5.600-5.600z" fill="#77933c"/><path d="M328.3 478.79999999999995l5.600 5.600-5.600 5.600-5.600-5.600z" fill="#77933c"/><path d="M384.4 508.9l5.600 5.600-5.600 5.600-5.600-5.600z" fill="#77933c"/><path d="M376.9 486.59999999999997l5.600 5.600-5.600 5.600-5.600-5.600z" fill="#77933c"/><path d="M448.6 455.7l5.600 5.600-5.600 5.600-5.600-5.600z" fill="#77933c"/><path d="M377.3 464.4l5.600 5.600-5.600 5.600-5.600-5.600z" fill="#77933c"/>
<defs><linearGradient id="tr" x1="0" y1="0" x2="0" y2="1"><stop offset="0" stop-color="#6a6a6a"/><stop offset=".18" stop-color="#555"/><stop offset=".8" stop-color="#555"/><stop offset="1" stop-color="#6e6e6e"/></linearGradient><linearGradient id="gg" x1="0" y1="0" x2="0" y2="1"><stop offset="0" stop-color="#8cc63a"/><stop offset=".15" stop-color="#80ba27"/><stop offset=".85" stop-color="#80ba27"/><stop offset="1" stop-color="#5f9412"/></linearGradient><linearGradient id="gb" x1="0" y1="0" x2="0" y2="1"><stop offset="0" stop-color="#2cb6f0"/><stop offset=".15" stop-color="#00a5ea"/><stop offset=".85" stop-color="#00a5ea"/><stop offset="1" stop-color="#007cb8"/></linearGradient></defs>
<rect x="582.8" y="440.3" width="247.2" height="24.3" rx="12.2" fill="url(#tr)" stroke="#8c8c8c" stroke-opacity=".45" stroke-width="1"/><rect x="580.8" y="438.8" width="226.5" height="27.8" rx="13.9" fill="#fff"/><rect x="583.8" y="441.8" width="220.5" height="21.8" rx="10.9" fill="url(#gg)"/><rect x="584.3" y="442.3" width="219.5" height="20.8" rx="10.4" fill="none" stroke="#5f9412" stroke-opacity=".45" stroke-width="1"/>
<rect x="584.7" y="475.4" width="246.9" height="23.5" rx="11.8" fill="url(#tr)" stroke="#8c8c8c" stroke-opacity=".45" stroke-width="1"/><rect x="582.7" y="474.3" width="214.3" height="27.6" rx="13.8" fill="#fff"/><rect x="585.7" y="477.3" width="208.3" height="21.6" rx="10.8" fill="url(#gb)"/><rect x="586.2" y="477.8" width="207.3" height="20.6" rx="10.3" fill="none" stroke="#007cb8" stroke-opacity=".45" stroke-width="1"/>
<rect x="583.4" y="509.2" width="248.2" height="24.3" rx="12.2" fill="url(#tr)" stroke="#8c8c8c" stroke-opacity=".45" stroke-width="1"/><rect x="581.4" y="507.6" width="165.1" height="27.5" rx="13.8" fill="#fff"/><rect x="584.4" y="510.6" width="159.1" height="21.5" rx="10.8" fill="url(#gg)"/><rect x="584.9" y="511.1" width="158.1" height="20.5" rx="10.2" fill="none" stroke="#5f9412" stroke-opacity=".45" stroke-width="1"/>
<rect x="583.6" y="543.8" width="248.0" height="24.0" rx="12.0" fill="url(#tr)" stroke="#8c8c8c" stroke-opacity=".45" stroke-width="1"/><rect x="581.6" y="542.4" width="103.3" height="27.2" rx="13.6" fill="#fff"/><rect x="584.6" y="545.4" width="97.3" height="21.2" rx="10.6" fill="url(#gb)"/><rect x="585.1" y="545.9" width="96.3" height="20.2" rx="10.1" fill="none" stroke="#007cb8" stroke-opacity=".45" stroke-width="1"/>
</svg>
<span class="t" style="left:239.60px;top:291.00px;font-size:21.5px;color:#fff;transform:scaleX(0.9156);-webkit-text-stroke:0px;">60%</span>
<span class="t" style="left:393.90px;top:291.00px;font-size:21.5px;color:#fff;transform:scaleX(0.9295);-webkit-text-stroke:0px;">35%</span>
<span class="t" style="left:203.50px;top:348.00px;font-size:12.5px;color:#bfbfbf;transform:scaleX(0.9332);-webkit-text-stroke:0.3px;">This is a sample Text</span>
<span class="t" style="left:357.40px;top:348.00px;font-size:12.5px;color:#bfbfbf;transform:scaleX(0.9332);-webkit-text-stroke:0.3px;">This is a sample Text</span>
<span class="t" style="left:584.80px;top:355.00px;font-size:14.3px;color:#fff;transform:scaleX(1.0081);-webkit-text-stroke:0.1px;">Title</span>
<span class="t" style="left:646.90px;top:355.00px;font-size:14.3px;color:#fff;transform:scaleX(1.0232);-webkit-text-stroke:0.1px;">Title</span>
<span class="t" style="left:708.90px;top:355.00px;font-size:14.3px;color:#fff;transform:scaleX(1.0194);-webkit-text-stroke:0.1px;">Title</span>
<span class="t" style="left:771.60px;top:355.00px;font-size:14.3px;color:#fff;transform:scaleX(1.0157);-webkit-text-stroke:0.1px;">Title</span>
<span class="t" style="left:184.00px;top:443.00px;font-size:12px;color:#fff;transform:scaleX(0.8990);-webkit-text-stroke:0.12px;">6</span>
<span class="t" style="left:184.00px;top:469.00px;font-size:12px;color:#fff;transform:scaleX(0.8990);-webkit-text-stroke:0.12px;">4</span>
<span class="t" style="left:184.00px;top:494.00px;font-size:12px;color:#fff;transform:scaleX(0.8990);-webkit-text-stroke:0.12px;">2</span>
<span class="t" style="left:184.00px;top:519.00px;font-size:12px;color:#fff;transform:scaleX(0.8990);-webkit-text-stroke:0.12px;">0</span>
<span class="t" style="left:198.40px;top:534.00px;font-size:12px;color:#fff;transform:scaleX(0.8990);-webkit-text-stroke:0.12px;">0</span>
<span class="t" style="left:269.00px;top:534.00px;font-size:12px;color:#fff;transform:scaleX(0.8990);-webkit-text-stroke:0.12px;">1</span>
<span class="t" style="left:339.40px;top:534.00px;font-size:12px;color:#fff;transform:scaleX(0.8990);-webkit-text-stroke:0.12px;">2</span>
<span class="t" style="left:409.80px;top:534.00px;font-size:12px;color:#fff;transform:scaleX(0.8990);-webkit-text-stroke:0.12px;">3</span>
<span class="t" style="left:480.40px;top:534.00px;font-size:12px;color:#fff;transform:scaleX(0.8990);-webkit-text-stroke:0.12px;">4</span>
<span class="t" style="left:211.60px;top:549.00px;font-size:13px;color:#7f7f7f;transform:scaleX(0.9451);-webkit-text-stroke:0.25px;">This is a sample text.</span>
<span class="t" style="left:354.20px;top:549.00px;font-size:13px;color:#7f7f7f;transform:scaleX(0.9435);-webkit-text-stroke:0.25px;">This is a sample text.</span>
<span class="t" style="left:538.90px;top:444.00px;font-size:14.3px;color:#fff;transform:scaleX(0.9571);">Text</span>
<span class="t" style="left:538.90px;top:481.00px;font-size:14.3px;color:#fff;transform:scaleX(0.9571);">Text</span>
<span class="t" style="left:538.90px;top:515.00px;font-size:14.3px;color:#fff;transform:scaleX(0.9571);">Text</span>
<span class="t" style="left:538.90px;top:551.00px;font-size:14.3px;color:#fff;transform:scaleX(0.9571);">Text</span>
<span class="t" style="left:700.30px;top:446.00px;font-size:14px;color:#fff;transform:scaleX(0.9636);">90%</span>
<span class="t" style="left:676.80px;top:481.00px;font-size:14px;color:#fff;transform:scaleX(0.9814);">85%</span>
<span class="t" style="left:650.50px;top:515.00px;font-size:14px;color:#fff;transform:scaleX(0.9850);">65%</span>
<span class="t" style="left:620.00px;top:550.00px;font-size:14px;color:#fff;transform:scaleX(0.9636);">40%</span>
<svg class="abs" style="left:186.89999999999998px;top:371.5px" width="44" height="21" viewBox="186.89999999999998 371.5 44 21"><path d="M187.9 381.6 L189.9 377.1 L192.4 375.1 L194.9 374.1 L196.9 372.8 L199.5 374.3 L202.0 374.6 L204.0 373.5 L206.5 372.2 L209.0 373.8 L211.0 374.6 L214.0 375.1 L217.0 373.8 L220.1 373.5 L221.6 372.5 L224.1 374.6 L225.1 376.1 L226.6 378.1 L228.6 382.1 L226.6 385.1 L225.6 387.6 L223.1 387.9 L221.1 389.6 L219.1 388.6 L216.5 388.9 L213.5 387.6 L211.0 388.6 L209.0 389.1 L207.0 388.6 L205.0 388.3 L203.0 389.1 L200.0 390.3 L197.9 389.1 L194.9 389.6 L192.9 388.6 L190.9 386.6 L189.4 384.6Z" fill="#d42a0e"/></svg>
<span class="t" style="left:162.60px;top:376.00px;font-size:12.5px;color:#fff;font-style:italic;transform:scaleX(0.8418);-webkit-text-stroke:0.3px;letter-spacing:-0.3px;">Slide</span>
<span class="t" style="left:191.00px;top:379.00px;font-size:8.2px;color:#fff;font-weight:700;transform:scaleX(1.0068);">HUNTER</span>
<svg class="abs" style="left:544.9000000000001px;top:371.5px" width="44" height="21" viewBox="544.9000000000001 371.5 44 21"><path d="M545.9 381.6 L547.9 377.1 L550.4 375.1 L552.9 374.1 L554.9 372.8 L557.5 374.3 L560.0 374.6 L562.0 373.5 L564.5 372.2 L567.0 373.8 L569.0 374.6 L572.0 375.1 L575.0 373.8 L578.1 373.5 L579.6 372.5 L582.1 374.6 L583.1 376.1 L584.6 378.1 L586.6 382.1 L584.6 385.1 L583.6 387.6 L581.1 387.9 L579.1 389.6 L577.1 388.6 L574.5 388.9 L571.5 387.6 L569.0 388.6 L567.0 389.1 L565.0 388.6 L563.0 388.3 L561.0 389.1 L558.0 390.3 L555.9 389.1 L552.9 389.6 L550.9 388.6 L548.9 386.6 L547.4 384.6Z" fill="#d42a0e"/></svg>
<span class="t" style="left:520.60px;top:376.00px;font-size:12.5px;color:#fff;font-style:italic;transform:scaleX(0.8418);-webkit-text-stroke:0.3px;letter-spacing:-0.3px;">Slide</span>
<span class="t" style="left:549.00px;top:379.00px;font-size:8.2px;color:#fff;font-weight:700;transform:scaleX(1.0068);">HUNTER</span>
<svg class="abs" style="left:186.89999999999998px;top:572.5px" width="44" height="21" viewBox="186.89999999999998 572.5 44 21"><path d="M187.9 582.6 L189.9 578.1 L192.4 576.1 L194.9 575.1 L196.9 573.8 L199.5 575.3 L202.0 575.6 L204.0 574.5 L206.5 573.2 L209.0 574.8 L211.0 575.6 L214.0 576.1 L217.0 574.8 L220.1 574.5 L221.6 573.5 L224.1 575.6 L225.1 577.1 L226.6 579.1 L228.6 583.1 L226.6 586.1 L225.6 588.6 L223.1 588.9 L221.1 590.6 L219.1 589.6 L216.5 589.9 L213.5 588.6 L211.0 589.6 L209.0 590.1 L207.0 589.6 L205.0 589.3 L203.0 590.1 L200.0 591.3 L197.9 590.1 L194.9 590.6 L192.9 589.6 L190.9 587.6 L189.4 585.6Z" fill="#d42a0e"/></svg>
<span class="t" style="left:162.60px;top:577.00px;font-size:12.5px;color:#fff;font-style:italic;transform:scaleX(0.8418);-webkit-text-stroke:0.3px;letter-spacing:-0.3px;">Slide</span>
<span class="t" style="left:191.00px;top:580.00px;font-size:8.2px;color:#fff;font-weight:700;transform:scaleX(1.0068);">HUNTER</span>
<svg class="abs" style="left:544.9000000000001px;top:572.5px" width="44" height="21" viewBox="544.9000000000001 572.5 44 21"><path d="M545.9 582.6 L547.9 578.1 L550.4 576.1 L552.9 575.1 L554.9 573.8 L557.5 575.3 L560.0 575.6 L562.0 574.5 L564.5 573.2 L567.0 574.8 L569.0 575.6 L572.0 576.1 L575.0 574.8 L578.1 574.5 L579.6 573.5 L582.1 575.6 L583.1 577.1 L584.6 579.1 L586.6 583.1 L584.6 586.1 L583.6 588.6 L581.1 588.9 L579.1 590.6 L577.1 589.6 L574.5 589.9 L571.5 588.6 L569.0 589.6 L567.0 590.1 L565.0 589.6 L563.0 589.3 L561.0 590.1 L558.0 591.3 L555.9 590.1 L552.9 590.6 L550.9 589.6 L548.9 587.6 L547.4 585.6Z" fill="#d42a0e"/></svg>
<span class="t" style="left:520.60px;top:577.00px;font-size:12.5px;color:#fff;font-style:italic;transform:scaleX(0.8418);-webkit-text-stroke:0.3px;letter-spacing:-0.3px;">Slide</span>
<span class="t" style="left:549.00px;top:580.00px;font-size:8.2px;color:#fff;font-weight:700;transform:scaleX(1.0068);">HUNTER</span>
<!-- status -->
<div class="abs" style="left:1px;top:643px;width:893px;height:1px;background:#c8c8c8;"></div>
<div class="abs" style="left:1px;top:644px;width:893px;height:21px;background:#f1f1f1;"></div>
<div class="abs" style="left:534px;top:644px;width:38px;height:21px;background:#c8c8c8;"></div>
<span class="t" style="left:8.00px;top:649.00px;font-size:11.8px;color:#555;transform:scaleX(0.9620);-webkit-text-stroke:0.12px;">Slide 1 of 2</span>
<span class="t" style="left:394.30px;top:649.00px;font-size:11.8px;color:#555;transform:scaleX(0.9408);-webkit-text-stroke:0.12px;">Notes</span>
<span class="t" style="left:461.70px;top:649.00px;font-size:11.8px;color:#555;transform:scaleX(0.9273);-webkit-text-stroke:0.12px;">Comments</span>
<span class="t" style="left:828.00px;top:649.00px;font-size:11.8px;color:#555;transform:scaleX(0.8807);-webkit-text-stroke:0.12px;">74%</span>
<svg class="abs" style="left:0;top:644px" width="895" height="21" viewBox="0 644 895 21" fill="none">
<!-- spellcheck book -->
<g stroke="#6a6a6a" stroke-width="1.100" fill="none"><path d="M85.500 647.500h5.300l.7 .9 .7-.9h5.300v10.300h-5.300l-.7 .9-.7-.9h-5.300z"/><path d="M91.500 648.500v10"/><path d="M90 658.800l1.500 1.500 1.500-1.500" stroke-width="1"/></g>
<path d="M99.600 650l-5.800 5.800" stroke="#f1f1f1" stroke-width="4.200"/><path d="M99.300 650.300l-5.300 5.300" stroke="#6a6a6a" stroke-width="2.500" stroke-linecap="round"/><path d="M98.600 651l-3.600 3.600" stroke="#ddd" stroke-width=".7"/>
<!-- notes -->
<path d="M377.500 654h11.500M377.500 656.500h11.500M377.500 659h11.500" stroke="#666" stroke-width="1"/><path d="M380.500 651.500h5.500l-2.750-3.500z" fill="#666"/>
<!-- comments -->
<path d="M445 648.500h11.500v8h-5.500l-3 3v-3h-3z" fill="#6a6a6a"/>
<!-- normal view -->
<g stroke="#6a6a6a" stroke-width="1.100"><rect x="546.500" y="647.500" width="13.500" height="11.500"/><path d="M550.500 647.500v11.500M550.500 655.500h9.500"/><rect x="552.800" y="649.700" width="5" height="2.600" stroke-width="1"/></g>
<!-- sorter -->
<g stroke="#6a6a6a" stroke-width="1.100"><rect x="584.500" y="647.500" width="5" height="4"/><rect x="592.500" y="647.500" width="5" height="4"/><rect x="584.500" y="654.500" width="5" height="4"/><rect x="592.500" y="654.500" width="5" height="4"/></g>
<!-- reading -->
<g stroke="#6a6a6a" stroke-width="1"><path d="M628.500 648.500v10.500M622.500 647.500c2 0 4.500 0 6 1 1.500-1 4-1 6-1v10c-2 0-4.500 0-6 1-1.500-1-4-1-6-1z"/><path d="M624 650h3M624 652h3M624 654h3M624 656h3M630 650h3M630 652h3M630 654h3M630 656h3" stroke-width=".9" stroke="#6a6a6a"/><path d="M627 659l1.500 1.500 1.500-1.500" stroke-width=".9"/></g>
<!-- slideshow -->
<g stroke="#6a6a6a" stroke-width="1.100"><path d="M659.500 648.200h14" stroke-width="1.500"/><path d="M661.500 649v6.500h10v-6.500"/><path d="M663.500 652.300h6" stroke="#999" stroke-width=".9"/><path d="M666.500 655.500v4M663.500 659.500h6"/></g>
<!-- zoom -->
<path d="M691 653.500h6" stroke="#555" stroke-width="1.600"/>
<path d="M701.500 653.500h99" stroke="#8a8a8a" stroke-width="1"/><path d="M751.500 650.500v6" stroke="#8a8a8a" stroke-width="1"/>
<rect x="736" y="647.500" width="4.500" height="11.500" fill="#555"/>
<path d="M805 653.500h7.500M808.750 649.750v7.500" stroke="#555" stroke-width="1.600"/>
<!-- fit -->
<g stroke="#666" stroke-width="1"><rect x="863.500" y="648.500" width="12.500" height="12.500"/><path d="M869.750 650v3.200M869.750 656.300v3.200M865 654.750h3.200M871.300 654.750h3.200"/><path d="M868.500 651.300l1.250-1.300 1.250 1.300M868.500 658.200l1.250 1.300 1.250-1.300M866.300 653.500l-1.300 1.250 1.300 1.250M873.200 653.500l1.300 1.250-1.300 1.250" stroke-width=".8" fill="none"/></g>
</svg>
<div class="abs" style="left:0;top:0;width:1px;height:666px;background:#b7472a"></div>
<div class="abs" style="left:894px;top:0;width:1px;height:666px;background:#b7472a"></div>
<div class="abs" style="left:0;top:665px;width:895px;height:1px;background:#b7472a"></div>
</div>
</body>
</html>
